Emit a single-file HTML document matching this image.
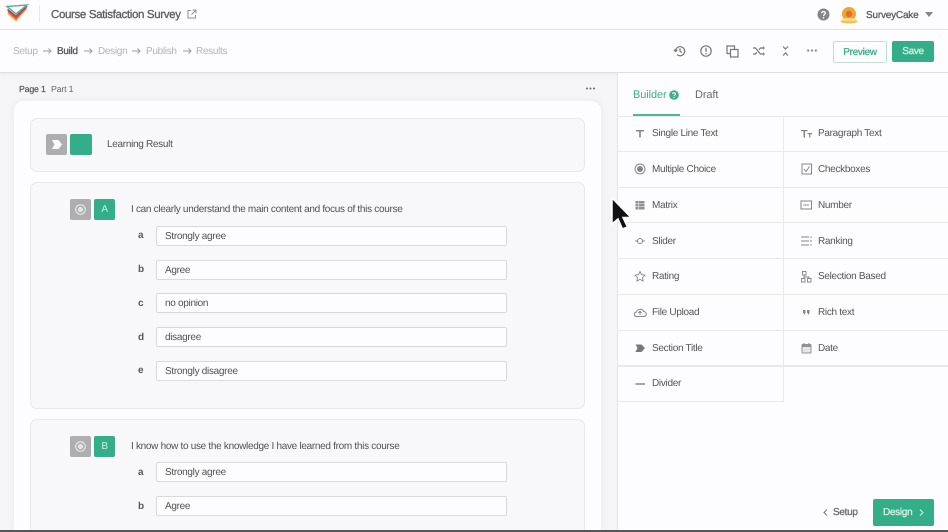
<!DOCTYPE html>
<html><head><meta charset="utf-8"><style>
html,body{margin:0;padding:0;width:948px;height:532px;overflow:hidden}
body{background:#f5f4f6;font-family:"Liberation Sans",sans-serif;color:#5f5f62}
#w{position:relative;width:948px;height:532px;overflow:hidden;background:#f5f4f6;text-rendering:geometricPrecision;letter-spacing:-.3px}
.a{position:absolute}
.t{position:absolute;white-space:nowrap;line-height:14px}
.m{-webkit-text-stroke:.3px currentColor}
.card{position:absolute;left:30px;width:553px;background:#f8f7f9;border:1px solid #e8e8ea;border-radius:7px}
.inp{position:absolute;left:156px;width:341px;height:18px;padding-left:8px;background:#fdfcfe;border:1px solid #d9d9db;border-radius:2px;font-size:10px;line-height:20px;color:#515154;overflow:hidden}
.l{position:absolute;left:138px;font-size:10px;font-weight:bold;color:#58585b;line-height:14px}
.gr{position:absolute;width:21px;height:21px;background:#aeadaf;border-radius:2px}
.gn{position:absolute;width:21px;height:21px;background:#34ae88;border-radius:2px;color:#cdeee2;font-size:10px;line-height:21px;text-align:center}
.r{position:absolute;background:#e9e9eb}
.it{position:absolute;font-size:10px;white-space:nowrap;color:#555558;line-height:14px}
svg{position:absolute;overflow:visible}
.ic{fill:none;stroke:#77777a;stroke-width:1.2}
.f{fill:#858588;stroke:none}
</style></head><body><div id="w">

<!-- top bar -->
<div class="a" style="left:0;top:0;width:948px;height:29px;background:#fdfcfe;border-bottom:1px solid #e4e4e6"></div>
<svg style="left:6px;top:4px" width="23" height="20" viewBox="0 0 23 20">
<path d="M2 9.500L10 16.500L20 5" fill="none" stroke="#eeb33f" stroke-width="1.600"/>
<path d="M2 7.500L10 14.500L20.500 3.500" fill="none" stroke="#d8604d" stroke-width="1.600"/>
<path d="M1.500 5.500L10 12.500L21 2" fill="none" stroke="#b53a52" stroke-width="1.600"/>
<path d="M1 2.500L21 1L10 10Z" fill="#fff" stroke="#57b297" stroke-width="1.500"/>
</svg>
<div class="a" style="left:39px;top:5px;width:1px;height:18px;background:#e8e8ea"></div>
<div class="t m" style="left:51px;top:7.500px;font-size:11.5px;color:#5c5c5f;letter-spacing:-.35px">Course Satisfaction Survey</div>
<svg style="left:187px;top:9px" width="10" height="10" viewBox="0 0 10 10"><path d="M4 1.500H1V9H8.500V6M5.500 1H9V4.500M9 1L4.500 5.500" fill="none" stroke="#909093" stroke-width="1"/></svg>

<svg style="left:817px;top:8px" width="13" height="13" viewBox="0 0 13 13"><circle cx="6.500" cy="6.500" r="6" fill="#858588"/><path d="M4.600 5.200C4.600 3 8.400 3 8.400 5.200C8.400 6.500 6.500 6.400 6.500 8" fill="none" stroke="#fff" stroke-width="1.300"/><rect x="5.800" y="9" width="1.400" height="1.400" fill="#fff"/></svg>
<svg style="left:840px;top:6px" width="18" height="18" viewBox="0 0 18 18"><ellipse cx="9" cy="15.500" rx="8.500" ry="2" fill="#f3c249"/><circle cx="9" cy="8" r="7" fill="#efa52f"/><circle cx="9" cy="8" r="3.200" fill="#e2702c"/><ellipse cx="9" cy="13.500" rx="8" ry="1.200" fill="#fbe7ae"/></svg>
<div class="t m" style="left:866px;top:8.500px;font-size:10px;color:#5c5c5f;letter-spacing:-.2px">SurveyCake</div>
<svg style="left:925px;top:12px" width="8" height="5" viewBox="0 0 8 5"><path class="f" d="M0 0H8L4 5Z"/></svg>

<!-- toolbar -->
<div class="a" style="left:0;top:30px;width:948px;height:42px;background:#fdfcfe;border-bottom:1px solid #dfdfe1;box-shadow:0 1px 3px rgba(0,0,0,.05)"></div>
<div class="t" style="left:13px;top:45px;font-size:10px;color:#b3b3b6">Setup</div>
<div class="t m" style="left:57px;top:45px;font-size:10px;color:#555558">Build</div>
<div class="t" style="left:98px;top:45px;font-size:10px;color:#b3b3b6">Design</div>
<div class="t" style="left:146px;top:45px;font-size:10px;color:#b3b3b6">Publish</div>
<div class="t" style="left:196px;top:45px;font-size:10px;color:#b3b3b6">Results</div>
<svg style="left:0;top:0" width="250" height="60" viewBox="0 0 250 60"><g fill="none" stroke="#9c9c9f" stroke-width="1"><path d="M43 51H51M48.500 48.500L51 51L48.500 53.500"/><path d="M84 51H92M89.500 48.500L92 51L89.500 53.500"/><path d="M132 51H140M137.500 48.500L140 51L137.500 53.500"/><path d="M183 51H191M188.500 48.500L191 51L188.500 53.500"/></g></svg>

<svg style="left:673px;top:45px" width="13" height="12" viewBox="0 0 13 12"><path class="ic" d="M2.500 6A4.600 4.600 0 1 1 4 9.600M0.800 4.600L2.500 6.500L4.300 4.800M7 3.200V6.200L9 7.500"/></svg>
<svg style="left:700px;top:45px" width="12" height="12" viewBox="0 0 12 12"><circle class="ic" cx="6" cy="6" r="5.200"/><path d="M6 2.800V6.800M6 8V9.200" stroke="#77777a" stroke-width="1.300" fill="none"/></svg>
<svg style="left:726px;top:45px" width="13" height="13" viewBox="0 0 13 13"><path class="ic" d="M4 8.500H1V1H8.500V4M4.500 4.500H12V12H4.500Z"/></svg>
<svg style="left:753px;top:46px" width="12" height="10" viewBox="0 0 12 10"><path class="ic" d="M0 2H2.500L7.500 8H10.500M0 8H2.500L4 6.200M6 3.800L7.500 2H10.500"/><path class="f" d="M10 0L12 2L10 4ZM10 6L12 8L10 10Z"/></svg>
<svg style="left:782px;top:46px" width="7" height="10" viewBox="0 0 7 10"><path class="ic" d="M1 0.500L3.500 3L6 0.500M1 9.500L3.500 7L6 9.500"/></svg>
<svg style="left:807px;top:49px" width="10" height="3" viewBox="0 0 10 3"><g class="f"><circle cx="1.200" cy="1.500" r="1.100"/><circle cx="5" cy="1.500" r="1.100"/><circle cx="8.800" cy="1.500" r="1.100"/></g></svg>

<div class="a m" style="left:833px;top:41px;width:52px;height:20px;border:1px solid #c3dfd6;border-radius:2px;background:#fdfcfe;color:#3fae8b;font-size:10px;line-height:21px;text-align:center">Preview</div>
<div class="a m" style="left:892px;top:41px;width:42px;height:21px;background:#34ae88;border-radius:2px;color:#d4f0e6;font-size:10px;line-height:22px;text-align:center">Save</div>

<!-- left area -->
<div class="t m" style="left:19px;top:82px;font-size:8.8px;color:#4f4f52;letter-spacing:-.2px;-webkit-text-stroke:.15px">Page 1</div>
<div class="t" style="left:51px;top:82px;font-size:8.8px;color:#66666a;letter-spacing:-.2px">Part 1</div>
<svg style="left:586px;top:87px" width="9" height="3" viewBox="0 0 9 3"><g fill="#6c6c6f"><circle cx="1" cy="1.500" r="1"/><circle cx="4.500" cy="1.500" r="1"/><circle cx="8" cy="1.500" r="1"/></g></svg>
<div class="a" style="left:14px;top:101px;width:587px;height:431px;background:#fdfcfe;border-radius:10px 10px 0 0;box-shadow:0 0 8px rgba(0,0,0,.05)"></div>

<div class="card" style="top:118px;height:52px"></div>
<div class="gr" style="left:46px;top:134px"></div>
<svg style="left:52px;top:140px" width="10" height="9" viewBox="0 0 10 9"><path d="M0 0H6.500L10 4.500L6.500 9H0L2.500 4.500Z" fill="#fff"/></svg>
<div class="gn" style="left:70px;top:134px;width:22px"></div>
<div class="t" style="left:107px;top:138px;font-size:10px;color:#515154">Learning Result</div>

<div class="card" style="top:182px;height:225px"></div>
<div class="gr" style="left:70px;top:199px"></div>
<svg style="left:75px;top:204px" width="11" height="11" viewBox="0 0 11 11"><circle cx="5.500" cy="5.500" r="4.800" fill="none" stroke="#eee" stroke-width="1"/><circle cx="5.500" cy="5.500" r="2.600" fill="#e4e4e4"/></svg>
<div class="gn" style="left:94px;top:199px">A</div>
<div class="t" style="left:131px;top:203px;font-size:10px;color:#515154">I can clearly understand the main content and focus of this course</div>
<div class="l" style="top:228.500px">a</div><div class="inp" style="top:226px">Strongly agree</div>
<div class="l" style="top:262.500px">b</div><div class="inp" style="top:260px">Agree</div>
<div class="l" style="top:296.500px">c</div><div class="inp" style="top:293px">no opinion</div>
<div class="l" style="top:330.500px">d</div><div class="inp" style="top:327px">disagree</div>
<div class="l" style="top:364px">e</div><div class="inp" style="top:361px">Strongly disagree</div>

<div class="card" style="top:419px;height:113px;border-bottom:0;border-radius:7px 7px 0 0"></div>
<div class="gr" style="left:70px;top:436px"></div>
<svg style="left:75px;top:441px" width="11" height="11" viewBox="0 0 11 11"><circle cx="5.500" cy="5.500" r="4.800" fill="none" stroke="#eee" stroke-width="1"/><circle cx="5.500" cy="5.500" r="2.600" fill="#e4e4e4"/></svg>
<div class="gn" style="left:94px;top:436px">B</div>
<div class="t" style="left:131px;top:440px;font-size:10px;color:#515154">I know how to use the knowledge I have learned from this course</div>
<div class="l" style="top:465.500px">a</div><div class="inp" style="top:462px">Strongly agree</div>
<div class="l" style="top:499.500px">b</div><div class="inp" style="top:496px">Agree</div>

<!-- right panel -->
<div class="a" style="left:617px;top:73px;width:330px;height:459px;background:#fdfcfe;border-left:1px solid #e6e6e8"></div>
<div class="t" style="left:633px;top:88px;font-size:11px;color:#3fae8b;letter-spacing:-.1px">Builder</div>
<svg style="left:669px;top:90px" width="10" height="10" viewBox="0 0 10 10"><circle cx="5" cy="5" r="4.800" fill="#3fae8b"/><path d="M3.500 4C3.500 2.400 6.500 2.400 6.500 4C6.500 5 5 5 5 6.200M5 7V8" fill="none" stroke="#fff" stroke-width="1"/></svg>
<div class="t" style="left:695px;top:88px;font-size:11px;color:#68686b;letter-spacing:-.1px">Draft</div>
<div class="a" style="left:633px;top:114px;width:47px;height:2px;background:#4fb797"></div>

<div class="r" style="left:618px;top:116px;width:330px;height:1px"></div>
<div class="r" style="left:618px;top:151px;width:330px;height:1px"></div>
<div class="r" style="left:618px;top:187px;width:330px;height:1px"></div>
<div class="r" style="left:618px;top:222px;width:330px;height:1px"></div>
<div class="r" style="left:618px;top:258px;width:330px;height:1px"></div>
<div class="r" style="left:618px;top:294px;width:330px;height:1px"></div>
<div class="r" style="left:618px;top:330px;width:330px;height:1px"></div>
<div class="r" style="left:618px;top:365px;width:330px;height:2px"></div>
<div class="r" style="left:618px;top:401px;width:166px;height:1px"></div>
<div class="r" style="left:783px;top:116px;width:1px;height:286px"></div>

<div class="it" style="left:652px;top:127px">Single Line Text</div>
<div class="it" style="left:652px;top:163px">Multiple Choice</div>
<div class="it" style="left:652px;top:199px">Matrix</div>
<div class="it" style="left:652px;top:235px">Slider</div>
<div class="it" style="left:652px;top:270px">Rating</div>
<div class="it" style="left:652px;top:306px">File Upload</div>
<div class="it" style="left:652px;top:342px">Section Title</div>
<div class="it" style="left:652px;top:377px">Divider</div>
<div class="it" style="left:818px;top:127px">Paragraph Text</div>
<div class="it" style="left:818px;top:163px">Checkboxes</div>
<div class="it" style="left:818px;top:199px">Number</div>
<div class="it" style="left:818px;top:235px">Ranking</div>
<div class="it" style="left:818px;top:270px">Selection Based</div>
<div class="it" style="left:818px;top:306px">Rich text</div>
<div class="it" style="left:818px;top:342px">Date</div>

<!-- panel icons -->
<svg style="left:0;top:0" width="948" height="532" viewBox="0 0 948 532">
<path d="M636 130H644V131.500H640.800V137.500H639.200V131.500H636Z" fill="#858588"/>
<path d="M801 130H807.500V131.300H805V137.500H803.500V131.300H801ZM807.500 133H812V134.200H810.400V137.500H809.200V134.200H807.500Z" fill="#858588"/>
<circle cx="640" cy="169" r="5" fill="none" stroke="#858588" stroke-width="1"/><circle cx="640" cy="169" r="3" fill="#858588"/>
<rect x="802" y="164" width="9.500" height="10" fill="none" stroke="#858588" stroke-width="1"/><path d="M804 169L806 171.500L809.500 166.500" fill="none" stroke="#858588"/>
<path d="M635.500 201H644.500V209.500H635.500Z" fill="#929295"/><path d="M638.500 201V209.500M635.500 203.800H644.500M635.500 206.600H644.500" stroke="#fdfcfe" stroke-width=".5"/>
<rect x="801" y="201" width="10.500" height="8" fill="none" stroke="#858588" stroke-width="1"/><path d="M803.500 205H809" stroke="#a5a5a8" stroke-width="2" stroke-dasharray="1 .6"/>
<path d="M635 241H637.500M642.500 241H645" stroke="#858588"/><circle cx="640" cy="241" r="2.500" fill="none" stroke="#858588"/>
<path d="M801 237H809M801 241H809M801 245H809M811 236.500V238M811 240V242M811 244V245.500" stroke="#858588" stroke-width="1"/>
<path d="M640 271.500L641.500 274.700L645 275.200L642.500 277.600L643.100 281L640 279.400L636.900 281L637.500 277.600L635 275.200L638.500 274.700Z" fill="none" stroke="#858588" stroke-width=".9"/>
<path d="M802.500 271.500H806V275H802.500ZM801.500 278.500H805V282H801.500ZM807.500 278.500H811V282H807.500ZM804 275V277H809V278.500M804 277V278.500" fill="none" stroke="#858588" stroke-width=".9"/>
<path d="M637 316.500C633.500 316.500 633.500 312.500 636.500 312C637.500 308.500 642.500 308.500 643.500 311.500C647 311.500 647.500 316.500 643.500 316.500Z" fill="none" stroke="#858588" stroke-width="1"/><path d="M640 315V311.500M638.300 313L640 311.300L641.700 313" fill="none" stroke="#858588" stroke-width=".9"/>
<path d="M803 310H805.500V313L804.500 314.500H803.500L804 313H803ZM807 310H809.500V313L808.500 314.500H807.500L808 313H807Z" fill="#858588"/>
<path d="M635.500 344.500H641.500L645 348L641.500 352H635.500L637.500 348Z" fill="#77777a"/>
<rect x="801.500" y="344" width="10" height="9.500" rx="1" fill="#929295"/><rect x="802.500" y="347" width="8" height="5.500" fill="#e6e6e8"/><path d="M804 343V345M809 343V345" stroke="#858588"/>
<path d="M635.500 384H645" stroke="#77777a" stroke-width="1.300"/>
</svg>

<!-- bottom right -->
<svg style="left:823px;top:509px" width="5" height="7" viewBox="0 0 5 7"><path d="M4 .5L1 3.500L4 6.500" fill="none" stroke="#77777a"/></svg>
<div class="t m" style="left:833px;top:505.500px;font-size:10px;color:#6c6c6f">Setup</div>
<div class="a" style="left:873px;top:499px;width:61px;height:27px;background:#34ae88;border-radius:2px"></div>
<div class="t m" style="left:883px;top:505.500px;font-size:10px;color:#d4f0e6">Design</div>
<svg style="left:919px;top:509px" width="5" height="7" viewBox="0 0 5 7"><path d="M1 .5L4 3.500L1 6.500" fill="none" stroke="#d4f0e6"/></svg>

<!-- cursor -->
<svg style="left:610px;top:196px" width="24" height="36" viewBox="0 0 24 36"><path d="M2 2V28L8 23L12.500 33L17.500 31L13 21.500H21Z" fill="#111" stroke="#fff" stroke-width="1.500"/></svg>

<div class="a" style="left:0;top:530px;width:948px;height:2px;background:#55555a"></div>
</div></body></html>
